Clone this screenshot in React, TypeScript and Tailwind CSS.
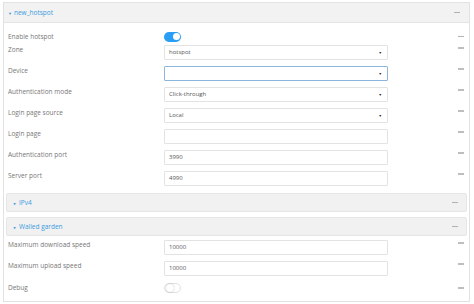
import React from 'react';

const Dots: React.FC = () => (
  <span className="flex items-center gap-[0.5px] w-[7px]">
    <span className="w-[1.5px] h-[1.5px] rounded-full bg-[#a8a8a8]" />
    <span className="w-[1.5px] h-[1.5px] rounded-full bg-[#a8a8a8]" />
    <span className="w-[1.5px] h-[1.5px] rounded-full bg-[#a8a8a8]" />
  </span>
);

const Toggle: React.FC<{ on: boolean }> = ({ on }) =>
  on ? (
    <span className="flex items-center justify-end w-[17px] h-[10px] rounded-full bg-[#2a9df4] px-[1.5px]">
      <span className="w-[7px] h-[7px] rounded-full bg-white" />
    </span>
  ) : (
    <span className="flex items-center justify-start w-[17px] h-[10px] rounded-full bg-white border border-[#e2e2e2] px-[0.5px]">
      <span className="w-[8px] h-[8px] rounded-full bg-white shadow-[0_0_1.5px_rgba(0,0,0,0.35)]" />
    </span>
  );

const Box: React.FC<{ value?: string; select?: boolean; focus?: boolean }> = ({ value, select, focus }) => (
  <div
    className={`flex items-center justify-between w-[224px] h-[15px] rounded-[1px] bg-white pl-[4px] pr-[5px] border ${
      focus ? 'border-[#8db6dd]' : 'border-[#e3e3e3]'
    }`}
  >
    <span className="text-[6px] text-[#555]">{value}</span>
    {select && <span className="text-[3.5px] text-[#222] leading-none">▼</span>}
  </div>
);

const FieldRow: React.FC<{ label: string; children: React.ReactNode }> = ({ label, children }) => (
  <div className="flex items-center h-[21px]">
    <div className="w-[160px] pl-[4px] self-start pt-[3px] text-[6.5px] text-[#777]">{label}</div>
    <div className="flex-1">{children}</div>
    <div className="w-[11px] self-start pt-[5px]">
      <Dots />
    </div>
  </div>
);

const SubPanel: React.FC<{ title: string }> = ({ title }) => (
  <div className="flex items-center justify-between h-[19px] mx-[2px] rounded-[2px] bg-[#f1f1f1] border border-[#e6e6e6] pl-[6px] pr-[7px]">
    <span className="text-[6.5px] text-[#3a9be0]">
      <span className="text-[4px] mr-[2px]">►</span>
      {title}
    </span>
    <Dots />
  </div>
);

export default function App() {
  return (
    <div className="w-[474px] h-[304px] bg-white pt-[2px] px-[3px]" style={{ fontFamily: '"Open Sans", sans-serif' }}>
      <div className="w-[467px] h-[300px] border border-[#e2e2e2] flex flex-col">
        <div className="flex items-center justify-between h-[20px] bg-[#f2f2f2] border-b border-[#e4e4e4] pl-[4px] pr-[8px]">
          <span className="text-[6.5px] text-[#3a9be0]">
            <span className="text-[4px] mr-[2px]">▼</span>new_hotspot
          </span>
          <Dots />
        </div>

        <div className="flex items-center h-[21px] mt-[3px]">
          <div className="w-[160px] pl-[4px] text-[6.5px] text-[#777]">Enable hotspot</div>
          <div className="flex-1">
            <Toggle on />
          </div>
          <div className="w-[11px]">
            <Dots />
          </div>
        </div>

        <div className="-mt-[5px]">
          <FieldRow label="Zone">
            <Box value="hotspot" select />
          </FieldRow>
          <FieldRow label="Device">
            <Box select focus />
          </FieldRow>
          <FieldRow label="Authentication mode">
            <Box value="Click-through" select />
          </FieldRow>
          <FieldRow label="Login page source">
            <Box value="Local" select />
          </FieldRow>
          <FieldRow label="Login page">
            <Box />
          </FieldRow>
          <FieldRow label="Authentication port">
            <Box value="3990" />
          </FieldRow>
          <FieldRow label="Server port">
            <Box value="4990" />
          </FieldRow>
        </div>

        <div className="flex flex-col gap-[5px] mt-[4px]">
          <SubPanel title="IPv4" />
          <SubPanel title="Walled garden" />
        </div>

        <div className="mt-[1px]">
          <FieldRow label="Maximum download speed">
            <Box value="10000" />
          </FieldRow>
          <FieldRow label="Maximum upload speed">
            <Box value="10000" />
          </FieldRow>
        </div>

        <div className="flex items-center h-[18px]">
          <div className="w-[160px] pl-[4px] text-[6.5px] text-[#777]">Debug</div>
          <div className="flex-1">
            <Toggle on={false} />
          </div>
          <div className="w-[11px]">
            <Dots />
          </div>
        </div>
      </div>
    </div>
  );
}
